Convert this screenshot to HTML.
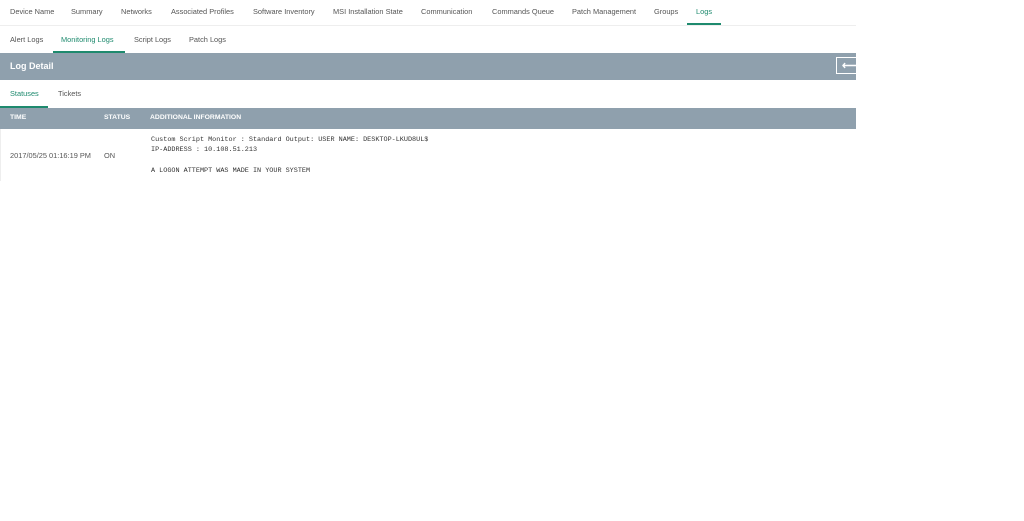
<!DOCTYPE html><html><head><style>
body{margin:0;width:1024px;height:521px;background:#fff;font-family:"Liberation Sans",sans-serif;font-size:7.4px;color:#555;position:relative;overflow:hidden}
.a{position:absolute;white-space:nowrap}
.t{top:7px}
.s{top:35px}
.u{position:absolute;background:#1e8a6e;height:2px}
.mono{font-family:"Liberation Mono",monospace;font-size:6.8px;color:#333;position:absolute;white-space:nowrap}
</style></head><body>
<div class="a t" style="left:10px">Device Name</div>
<div class="a t" style="left:71px">Summary</div>
<div class="a t" style="left:121px">Networks</div>
<div class="a t" style="left:171px">Associated Profiles</div>
<div class="a t" style="left:253px">Software Inventory</div>
<div class="a t" style="left:333px">MSI Installation State</div>
<div class="a t" style="left:421px">Communication</div>
<div class="a t" style="left:492px">Commands Queue</div>
<div class="a t" style="left:572px">Patch Management</div>
<div class="a t" style="left:654px">Groups</div>
<div class="a t" style="left:696px;color:#1e8a6e">Logs</div>
<div class="u" style="left:687px;top:23px;width:34px"></div>
<div style="position:absolute;left:0;top:25px;width:856px;height:1px;background:#eee"></div>
<div class="a s" style="left:10px">Alert Logs</div>
<div class="a s" style="left:61px;color:#1e8a6e">Monitoring Logs</div>
<div class="a s" style="left:134px">Script Logs</div>
<div class="a s" style="left:189px">Patch Logs</div>
<div class="u" style="left:53px;top:51px;width:72px"></div>
<div style="position:absolute;left:0;top:53px;width:856px;height:27px;background:#8fa0ad"></div>
<div class="a" style="left:10px;top:61px;color:#fff;font-weight:bold;font-size:9px">Log Detail</div>
<div style="position:absolute;left:836px;top:57px;width:20px;height:17px;border:1px solid #fff;border-right:none;box-sizing:border-box"></div>
<div class="a" style="left:842px;top:59px;color:#fff;font-size:11px;font-weight:bold">⟵</div>
<div class="a" style="left:10px;top:89px;color:#1e8a6e">Statuses</div>
<div class="a" style="left:58px;top:89px">Tickets</div>
<div class="u" style="left:0;top:106px;width:48px"></div>
<div style="position:absolute;left:0;top:108px;width:856px;height:21px;background:#8fa0ad"></div>
<div class="a" style="left:10px;top:114px;color:#fff;font-weight:bold;font-size:6.8px">TIME</div>
<div class="a" style="left:104px;top:114px;color:#fff;font-weight:bold;font-size:6.8px">STATUS</div>
<div class="a" style="left:150px;top:114px;color:#fff;font-weight:bold;font-size:6.8px">ADDITIONAL INFORMATION</div>
<div style="position:absolute;left:0;top:129px;width:1px;height:52px;background:#eee"></div>
<div class="a" style="left:10px;top:151px">2017/05/25 01:16:19 PM</div>
<div class="a" style="left:104px;top:151px">ON</div>
<div class="mono" style="left:151px;top:136px">Custom Script Monitor : Standard Output: USER NAME: DESKTOP-LKUD8UL$</div>
<div class="mono" style="left:151px;top:146px">IP-ADDRESS : 10.108.51.213</div>
<div class="mono" style="left:151px;top:167px">A LOGON ATTEMPT WAS MADE IN YOUR SYSTEM</div>
</body></html>
